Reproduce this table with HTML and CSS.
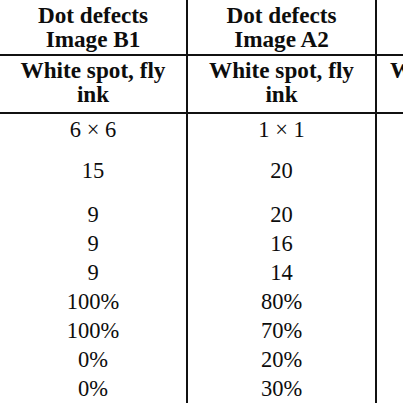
FILE: index.html
```html
<!DOCTYPE html>
<html lang="en">
<head>
<meta charset="utf-8">
<title>Dot defects</title>
<link rel="stylesheet" href="styles.css">
</head>
<body>
<table class="defects">
  <colgroup>
    <col class="c1"><col class="c2"><col class="c3">
  </colgroup>
  <thead>
    <tr class="h1">
      <th class="bl">Dot defects<br>Image B1</th>
      <th class="bl">Dot defects<br>Image A2</th>
      <th></th>
    </tr>
    <tr class="h2">
      <th class="bl">White spot, fly<br>ink</th>
      <th class="bl">White spot, fly<br>ink</th>
      <th>White spot, fly<br>ink</th>
    </tr>
  </thead>
  <tbody>
    <tr class="d1"><td class="bl">6 × 6</td><td class="bl">1 × 1</td><td></td></tr>
    <tr class="d2"><td class="bl">15</td><td class="bl">20</td><td></td></tr>
    <tr class="d3"><td class="bl">9</td><td class="bl">20</td><td></td></tr>
    <tr><td class="bl">9</td><td class="bl">16</td><td></td></tr>
    <tr><td class="bl">9</td><td class="bl">14</td><td></td></tr>
    <tr><td class="bl">100%</td><td class="bl">80%</td><td></td></tr>
    <tr><td class="bl">100%</td><td class="bl">70%</td><td></td></tr>
    <tr><td class="bl">0%</td><td class="bl">20%</td><td></td></tr>
    <tr><td class="bl">0%</td><td class="bl">30%</td><td></td></tr>
  </tbody>
</table>
</body>
</html>
```
FILE: styles.css
```css
html, body {
  margin: 0;
  padding: 0;
  background: #fff;
  overflow: hidden;
  width: 403px;
  height: 403px;
}

.defects {
  border-collapse: separate;
  border-spacing: 0;
  table-layout: fixed;
  width: 548px;
  color: #0d0d0d;
}

.c1 { width: 188px; }
.c2 { width: 189px; }
.c3 { width: 171px; }

.defects th,
.defects td {
  font-family: "Liberation Serif", "Times New Roman", serif;
  padding: 0;
  text-align: center;
  vertical-align: top;
  white-space: nowrap;
  color: #0d0d0d;
}

.defects .bl {
  border-right: 2px solid #111;
}

.defects th {
  font-weight: bold;
  font-size: 23.2px;
  line-height: 24px;
  border-bottom: 2px solid #111;
  box-sizing: border-box;
}

.h1 th {
  height: 56px;
  padding-top: 3px;
}

.h2 th {
  height: 58px;
  padding-top: 2px;
}

.defects td {
  font-size: 22.5px;
  line-height: 29px;
}

.d1 td { padding-top: 1px; }
.d2 td { padding-top: 12px; }
.d3 td { padding-top: 15px; }
```
